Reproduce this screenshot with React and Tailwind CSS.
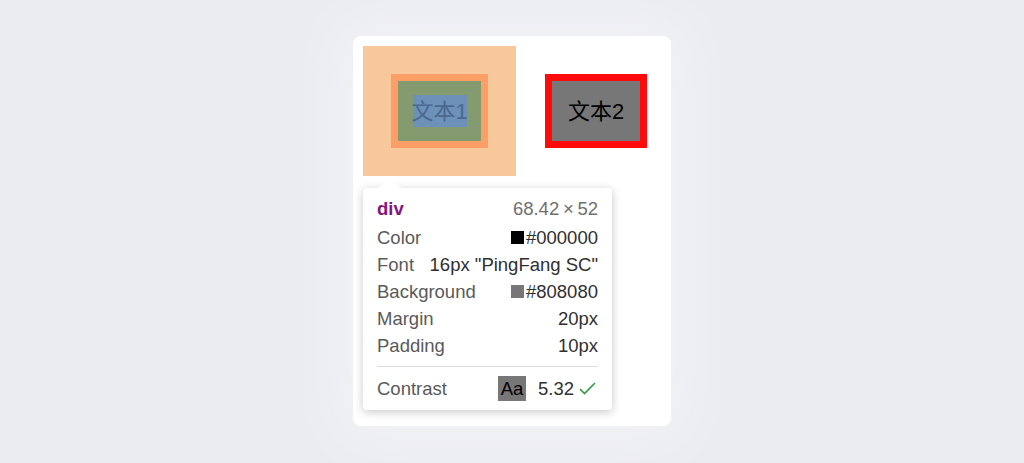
import React from 'react';

const font = { fontFamily: '"Liberation Sans", "Noto Sans CJK SC", sans-serif' };

const Row = ({ label, children }) => (
  <div className="flex h-[27px] items-center justify-between">
    <span className="text-[#5a5a5a]">{label}</span>
    <span className="flex items-center text-[#303030]">{children}</span>
  </div>
);

const Swatch = ({ color }) => (
  <span className={`mr-[2px] inline-block h-[13px] w-[13px] ${color}`}></span>
);

export default function App() {
  return (
    <div
      className="flex h-[463px] w-full justify-center bg-[#ebecf0] pt-[36px]"
      style={font}
    >
      <div className="relative h-[390px] w-[318px] rounded-[8px] bg-white p-[10px] shadow-[0_0_60px_20px_rgba(255,255,255,0.35)]">
        <div className="flex items-start">
          {/* highlighted element: margin / border / padding / content */}
          <div className="flex h-[130px] w-[153px] items-center justify-center bg-[#f7c89b]">
            <div className="flex h-[74px] w-[97px] items-center justify-center bg-[#fd9e66]">
              <div className="flex h-[60px] w-[83px] items-center justify-center bg-[#849b6f]">
                <div className="flex h-[32px] w-[54px] items-center justify-center whitespace-nowrap bg-[#6d91b9] text-[22px] text-[#4a6890]">
                  文本1
                </div>
              </div>
            </div>
          </div>
          <div className="ml-[29px] mt-[28px] flex h-[74px] w-[102px] items-center justify-center border-[7px] border-[#ff0a0a] bg-[#777777] text-[22px] text-black">
            文本2
          </div>
        </div>

        {/* inspector tooltip */}
        <div className="absolute left-[10px] top-[152px] w-[249px] rounded-[4px] bg-white px-[14px] pb-[8px] pt-[7px] text-[18.5px] shadow-[0_2px_10px_rgba(0,0,0,0.22)]">
          <div className="absolute -top-[10px] left-[15px] h-0 w-0 border-x-[12px] border-b-[10px] border-x-transparent border-b-white"></div>
          <div className="mb-[2px] flex h-[27px] items-center justify-between">
            <span className="font-bold text-[#881280]">div</span>
            <span className="text-[#6f6f6f]">68.42{'\u2009'}×{'\u2009'}52</span>
          </div>
          <Row label="Color">
            <Swatch color="bg-black" />
            #000000
          </Row>
          <Row label="Font">16px "PingFang SC"</Row>
          <Row label="Background">
            <Swatch color="bg-[#777777]" />
            #808080
          </Row>
          <Row label="Margin">20px</Row>
          <Row label="Padding">10px</Row>
          <div className="mt-[7px] border-t border-[#dcdcdc]"></div>
          <div className="mt-[8px] flex h-[27px] items-center justify-between">
            <span className="text-[#5a5a5a]">Contrast</span>
            <span className="flex items-center text-[#303030]">
              <span className="mr-[12px] flex h-[25px] w-[28px] items-center justify-center bg-[#777777] text-black">
                Aa
              </span>
              5.32
              <svg className="ml-[5px] mr-[2px]" width="17" height="13" viewBox="0 0 17 13" fill="none">
                <path d="M1 7l4.5 4.5L16 1" stroke="#2f9e44" strokeWidth="1.6" />
              </svg>
            </span>
          </div>
        </div>
      </div>
    </div>
  );
}
